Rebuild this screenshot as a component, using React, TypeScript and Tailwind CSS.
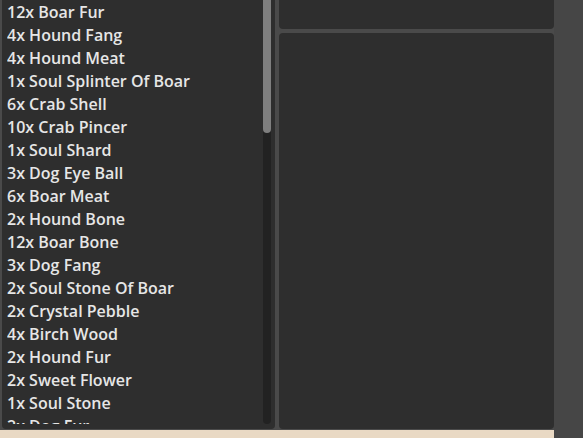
const items = [
  '12x Boar Fur',
  '4x Hound Fang',
  '4x Hound Meat',
  '1x Soul Splinter Of Boar',
  '6x Crab Shell',
  '10x Crab Pincer',
  '1x Soul Shard',
  '3x Dog Eye Ball',
  '6x Boar Meat',
  '2x Hound Bone',
  '12x Boar Bone',
  '3x Dog Fang',
  '2x Soul Stone Of Boar',
  '2x Crystal Pebble',
  '4x Birch Wood',
  '2x Hound Fur',
  '2x Sweet Flower',
  '1x Soul Stone',
  '2x Dog Fur',
]

export default function App() {
  return (
    <div className="w-[583px] h-[438px] bg-[#464646] flex overflow-hidden font-['Open_Sans',sans-serif]">
      <div className="w-[554px] flex flex-col">
        <div className="h-[430px] flex gap-1 pl-0.5 pb-px bg-[#4a4a4a]">
          {/* inventory list */}
          <div className="w-[273px] bg-[#2e2e2e] rounded-b flex pl-[5px] pr-1 pb-[5px]">
            <div className="flex-1 overflow-hidden pt-px">
              {items.map((item) => (
                <div key={item} className="h-[23px] leading-[23px] text-[16px] font-semibold text-[#e6e6e6] whitespace-nowrap">
                  {item}
                </div>
              ))}
            </div>
            <div className="w-2 bg-[#222222] rounded-b-full flex flex-col">
              <div className="h-[133px] bg-[#7f7f7f] rounded-b-full" />
            </div>
          </div>

          <div className="w-[275px] flex flex-col gap-1">
            <div className="h-[29px] bg-[#2e2e2e] rounded-b" />
            <div className="flex-1 bg-[#2e2e2e] rounded" />
          </div>
        </div>
        <div className="flex-1 bg-[#e9d9c4]" />
      </div>
      <div className="flex-1 bg-[#464646]" />
    </div>
  )
}
